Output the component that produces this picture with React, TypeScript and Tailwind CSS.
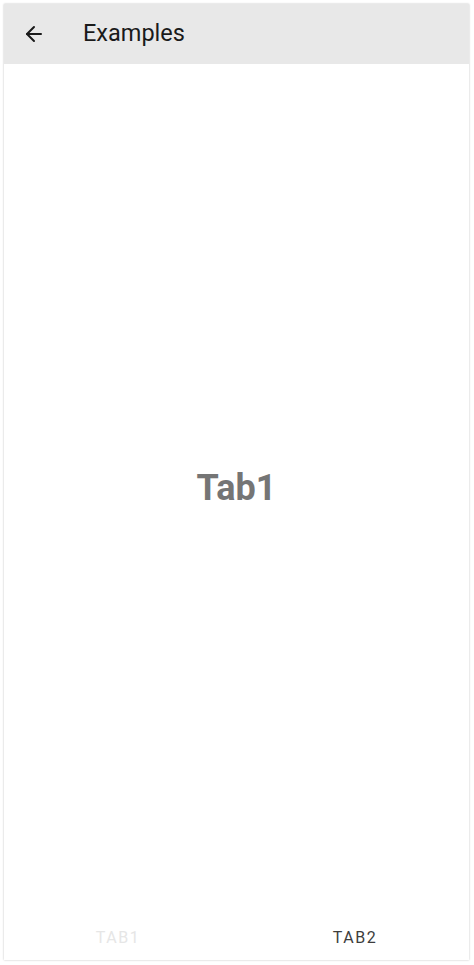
import { ArrowLeft } from 'lucide-react'

export default function App() {
  return (
    <div className="w-[474px] h-[965px] bg-white p-[4px] pr-[5px] pb-[5px]" style={{ fontFamily: 'Roboto, "Noto Sans", sans-serif' }}>
      <div className="h-full flex flex-col bg-white shadow-[0_0_2px_rgba(0,0,0,0.25)]">
        <div className="h-[60px] bg-[#e8e8e8] flex items-center shrink-0">
          <div className="w-[56px] pl-[18px] flex items-center">
            <ArrowLeft size={24} strokeWidth={2} className="text-[#1a1a1a]" />
          </div>
          <span className="ml-[23px] text-[23.5px] font-normal text-[#1a1a1a]">Examples</span>
        </div>
        <div className="flex-1 flex items-center justify-center">
          <span className="text-[36px] font-bold text-[#757575]">Tab1</span>
        </div>
        <div className="h-[48px] pt-[4px] flex shrink-0">
          <div className="flex-1 flex items-center justify-center pr-[3px] text-[16px] tracking-[0.1em] font-normal text-[#e6e6e6]">
            TAB1
          </div>
          <div className="flex-1 flex items-center justify-center pl-[6px] text-[16px] tracking-[0.1em] font-normal text-[#3d3d3d]">
            TAB2
          </div>
        </div>
      </div>
    </div>
  )
}
